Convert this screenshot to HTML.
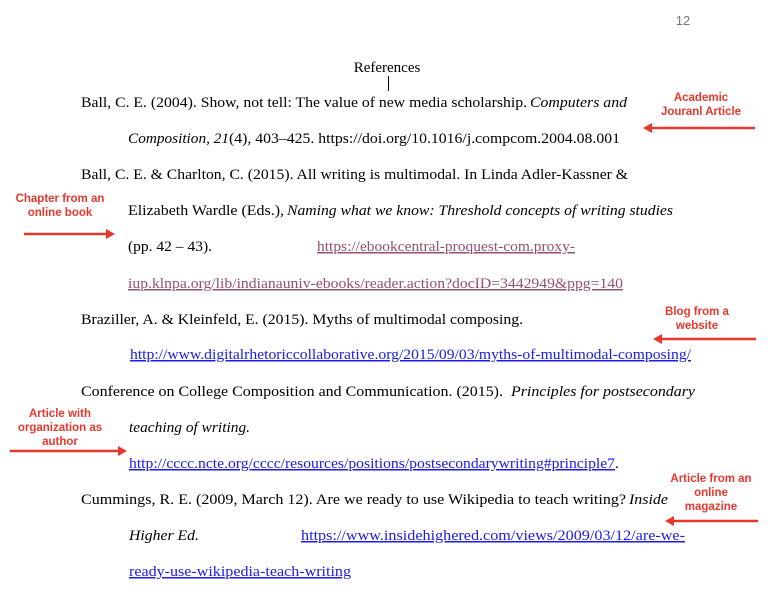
<!DOCTYPE html>
<html><head><meta charset="utf-8"><style>
html,body{margin:0;padding:0;background:#fff;width:771px;height:595px;overflow:hidden}
svg{display:block}
.t{font-family:"Liberation Serif",serif;font-size:15px;fill:#000}
.i{font-style:italic}
.b{fill:#1b1bea;text-decoration:underline}
.p{fill:#954f72;text-decoration:underline}
.r{font-family:"Liberation Sans",sans-serif;font-weight:bold;font-size:11.5px;fill:#e8382d}
</style></head><body>
<svg width="771" height="595" viewBox="0 0 771 595" xmlns="http://www.w3.org/2000/svg">
<text x="683" y="25" text-anchor="middle" font-family="Liberation Sans,sans-serif" font-size="13" fill="#777">12</text>
<text class="t" x="387" y="72" text-anchor="middle">References</text>
<line x1="388.5" y1="76" x2="388.5" y2="91" stroke="#000" stroke-width="1"/>

<text class="t" x="81" y="107" textLength="446" lengthAdjust="spacingAndGlyphs">Ball, C. E. (2004). Show, not tell: The value of new media scholarship.</text>
<text class="t i" x="530" y="107" textLength="97" lengthAdjust="spacingAndGlyphs">Computers and</text>

<text class="t i" x="128" y="143" textLength="101" lengthAdjust="spacingAndGlyphs">Composition, 21</text>
<text class="t" x="229" y="143" textLength="391" lengthAdjust="spacingAndGlyphs">(4), 403–425. https://doi.org/10.1016/j.compcom.2004.08.001</text>

<text class="t" x="81" y="179" textLength="547" lengthAdjust="spacingAndGlyphs">Ball, C. E. &amp; Charlton, C. (2015). All writing is multimodal. In Linda Adler-Kassner &amp;</text>

<text class="t" x="128" y="215" textLength="156" lengthAdjust="spacingAndGlyphs">Elizabeth Wardle (Eds.),</text>
<text class="t i" x="287" y="215" textLength="386" lengthAdjust="spacingAndGlyphs">Naming what we know: Threshold concepts of writing studies</text>

<text class="t" x="128" y="251" textLength="84" lengthAdjust="spacingAndGlyphs">(pp. 42 – 43).</text>
<text class="t p" x="317" y="251" textLength="258" lengthAdjust="spacingAndGlyphs">https://ebookcentral-proquest-com.proxy-</text>
<text class="t p" x="128" y="288" textLength="495" lengthAdjust="spacingAndGlyphs">iup.klnpa.org/lib/indianauniv-ebooks/reader.action?docID=3442949&amp;ppg=140</text>

<text class="t" x="81" y="324" textLength="442" lengthAdjust="spacingAndGlyphs">Braziller, A. &amp; Kleinfeld, E. (2015). Myths of multimodal composing.</text>
<text class="t b" x="130" y="359" textLength="561" lengthAdjust="spacingAndGlyphs">http://www.digitalrhetoriccollaborative.org/2015/09/03/myths-of-multimodal-composing/</text>

<text class="t" x="81" y="396" textLength="422" lengthAdjust="spacingAndGlyphs">Conference on College Composition and Communication. (2015).</text>
<text class="t i" x="511" y="396" textLength="184" lengthAdjust="spacingAndGlyphs">Principles for postsecondary</text>
<text class="t i" x="129" y="432" textLength="121" lengthAdjust="spacingAndGlyphs">teaching of writing.</text>
<text class="t b" x="129" y="468" textLength="486" lengthAdjust="spacingAndGlyphs">http://cccc.ncte.org/cccc/resources/positions/postsecondarywriting#principle7</text>
<text class="t" x="615" y="468">.</text>

<text class="t" x="81" y="504" textLength="545" lengthAdjust="spacingAndGlyphs">Cummings, R. E. (2009, March 12). Are we ready to use Wikipedia to teach writing?</text>
<text class="t i" x="629" y="504" textLength="39" lengthAdjust="spacingAndGlyphs">Inside</text>
<text class="t i" x="129" y="540" textLength="70" lengthAdjust="spacingAndGlyphs">Higher Ed.</text>
<text class="t b" x="301" y="540" textLength="384" lengthAdjust="spacingAndGlyphs">https://www.insidehighered.com/views/2009/03/12/are-we-</text>
<text class="t b" x="129" y="576" textLength="222" lengthAdjust="spacingAndGlyphs">ready-use-wikipedia-teach-writing</text>

<g class="r" text-anchor="middle">
<text class="r" x="701" y="101">Academic</text>
<text class="r" x="701" y="115">Jouranl Article</text>
<text class="r" x="60" y="202">Chapter from an</text>
<text class="r" x="60" y="216">online book</text>
<text class="r" x="697" y="315">Blog from a</text>
<text class="r" x="697" y="329">website</text>
<text class="r" x="60" y="417">Article with</text>
<text class="r" x="60" y="431">organization as</text>
<text class="r" x="60" y="445">author</text>
<text class="r" x="711" y="482">Article from an</text>
<text class="r" x="711" y="496">online</text>
<text class="r" x="711" y="510">magazine</text>
</g>
<g stroke="#e8382d" stroke-width="2.5" fill="#e8382d">
<line x1="650" y1="128" x2="755" y2="128"/><polygon points="643,128 652,123 652,133" stroke="none"/>
<line x1="24" y1="234" x2="108" y2="234"/><polygon points="115,234 106,229 106,239" stroke="none"/>
<line x1="660" y1="339" x2="756" y2="339"/><polygon points="653,339 662,334 662,344" stroke="none"/>
<line x1="10" y1="451" x2="120" y2="451"/><polygon points="127,451 118,446 118,456" stroke="none"/>
<line x1="672" y1="521" x2="758" y2="521"/><polygon points="665,521 674,516 674,526" stroke="none"/>
</g>
</svg>
</body></html>
